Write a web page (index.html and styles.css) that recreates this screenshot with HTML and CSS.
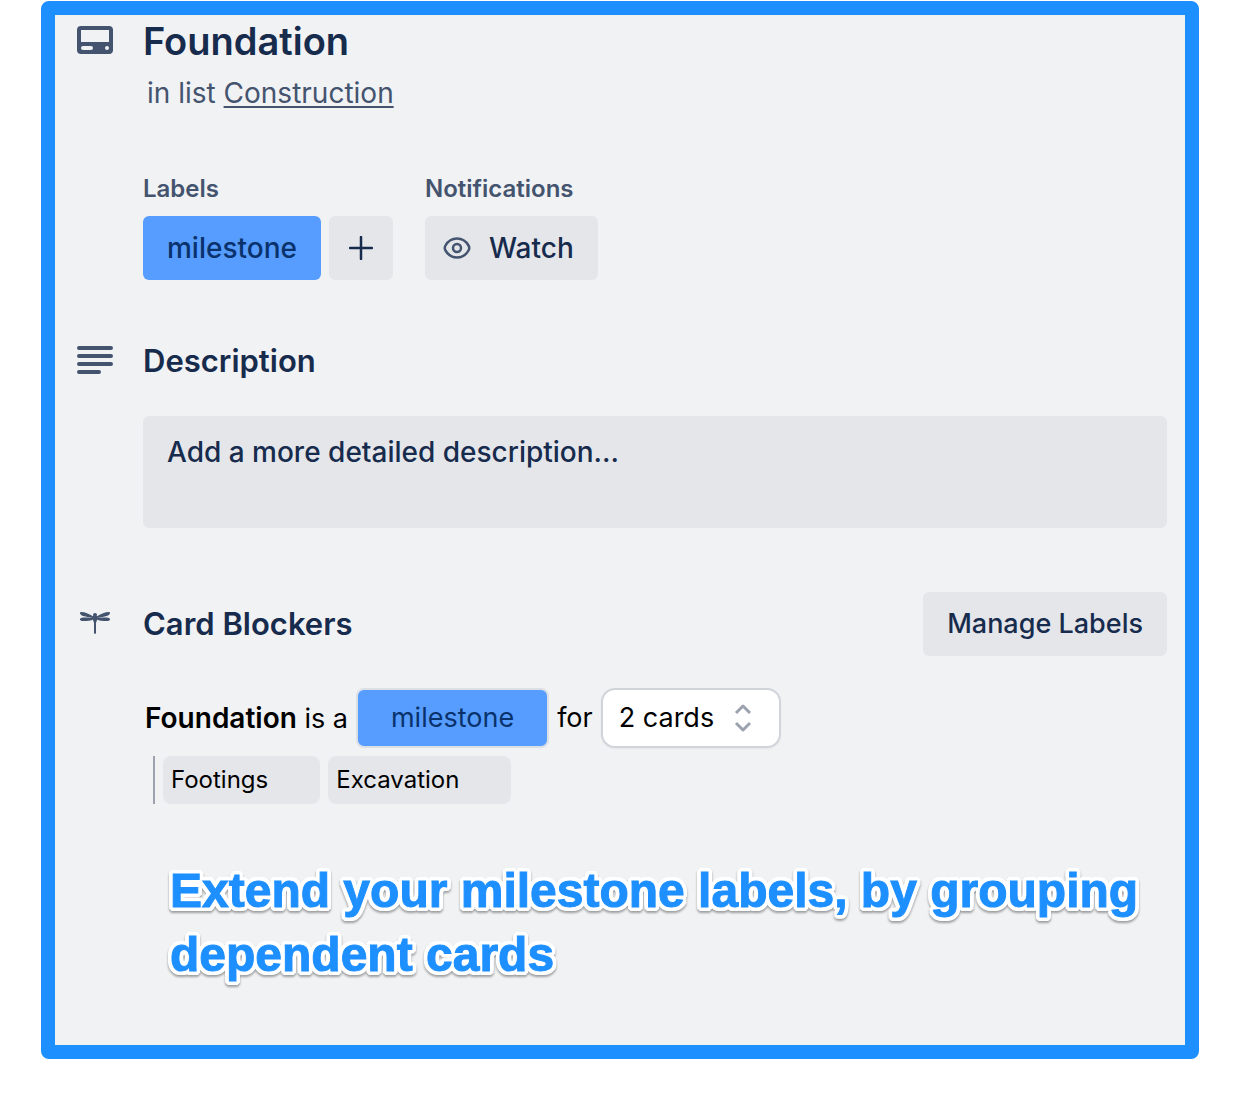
FILE: index.html
```html
<!DOCTYPE html>
<html lang="en">
<head>
  <meta charset="utf-8">
  <title>Foundation</title>
  <link rel="stylesheet" href="styles.css">
</head>
<body>
  <main class="card">
    <header class="section card-header">
      <svg class="icon" viewBox="0 0 36 36" width="36" height="36" aria-hidden="true">
        <path fill-rule="evenodd" fill="#44546f" d="M4 4h28a4 4 0 0 1 4 4v20a4 4 0 0 1-4 4H4a4 4 0 0 1-4-4V8a4 4 0 0 1 4-4zM4 8v12h28V8zM6 24a2 2 0 0 0 0 4h8a2 2 0 0 0 0-4zM30 24a2 2 0 1 0 0 4 2 2 0 0 0 0-4z"/>
      </svg>
      <div>
        <h1>Foundation</h1>
        <p class="in-list">in list <a href="#">Construction</a></p>
      </div>
    </header>

    <div class="details">
      <section>
        <h3>Labels</h3>
        <div class="button-row">
          <button class="button label">milestone</button>
          <button class="button add" aria-label="Add label">
            <svg viewBox="0 0 24 24" width="24" height="24" aria-hidden="true">
              <path d="M12 1v22M1 12h22" stroke="#172b4d" stroke-width="2.500" stroke-linecap="round"/>
            </svg>
          </button>
        </div>
      </section>
      <section>
        <h3>Notifications</h3>
        <button class="button watch">
          <svg viewBox="0 0 28 24" width="28" height="24" fill="none" stroke="#44546f" stroke-width="2.500" aria-hidden="true">
            <path d="M14 2.500C8.500 2.500 4.500 6 2.500 9.500Q1 12 2.500 14.500C4.500 18 8.500 21.500 14 21.500s9.500-3.500 11.500-7Q27 12 25.500 9.500C23.500 6 19.500 2.500 14 2.500z"/>
            <circle cx="14" cy="12" r="4"/>
          </svg>
          Watch
        </button>
      </section>
    </div>

    <section class="section description">
      <svg class="icon" viewBox="0 0 36 36" width="36" height="36" aria-hidden="true">
        <path d="M2 6h32M2 14h32M2 22h32M2 30h20" stroke="#44546f" stroke-width="4" stroke-linecap="round"/>
      </svg>
      <div>
        <h2><label for="description">Description</label></h2>
        <textarea id="description" placeholder="Add a more detailed description..."></textarea>
      </div>
    </section>

    <section class="section blockers">
      <svg class="icon" viewBox="0 0 36 36" width="36" height="36" fill="#44546f" aria-hidden="true">
        <path d="M17 10C13 7 8 5 4 5c-2 0-1 3 2 4 3 1 8 1 11 3zM19 10c4-3 9-5 13-5 2 0 1 3-2 4-3 1-8 1-11 3z"/>
        <path d="M17 11c-5 0-9-1-13 0-2 1-1 3 2 3 4 0 8 0 11-2zM19 11c5 0 9-1 13 0 2 1 1 3-2 3-4 0-8 0-11-2z"/>
        <circle cx="18" cy="8" r="2"/>
        <path d="M16 9h4v4l-1 3v10q-1 2-2 0V16l-1-3z"/>
      </svg>
      <div>
        <div class="blockers-header">
          <h2>Card Blockers</h2>
          <button class="button manage">Manage Labels</button>
        </div>
        <div class="sentence">
          <span><strong>Foundation</strong> is a</span>
          <button class="label-picker">milestone</button>
          <label for="count">for</label>
          <span class="count-picker">
            <select id="count">
              <option>2 cards</option>
            </select>
            <svg viewBox="0 0 20 32" width="20" height="32" aria-hidden="true">
              <path d="M3 11l7-7 7 7M3 21l7 7 7-7" fill="none" stroke="#9ca3af" stroke-width="3" stroke-linejoin="round"/>
            </svg>
          </span>
        </div>
        <ul class="blocked-cards">
          <li>Footings</li>
          <li>Excavation</li>
        </ul>
      </div>
    </section>

    <p class="caption">Extend your milestone labels, by grouping dependent cards</p>
  </main>
</body>
</html>
```
FILE: styles.css
```css
* {
  box-sizing: border-box;
}

body {
  margin: 1px 41px;
  background-color: white;
  color: #172b4d;
  font: 28px/32px Inter, sans-serif;
}

h1, h2, h3, p, ul {
  margin: 0;
  padding: 0;
}

button, select, textarea {
  font: inherit;
  color: inherit;
  border: none;
}

.card {
  padding: 2px 18px 58px 22px;
  border: 14px solid #1d8fff;
  border-radius: 8px;
  background-color: #f1f2f4;
}

.section {
  display: grid;
  grid-template-columns: 36px 1fr;
  column-gap: 30px;
}

.card-header .icon {
  margin-top: 5px;
}

h1 {
  font-size: 38px;
  line-height: 48px;
  font-weight: 600;
}

h2 {
  font-size: 31px;
  line-height: 42px;
  font-weight: 600;
}

h3 {
  margin-bottom: 11px;
  color: #44546f;
  font-size: 24px;
  line-height: 32px;
  font-weight: 600;
}

.in-list {
  padding: 12px 4px 0;
  color: #44546f;
}

.in-list a {
  color: inherit;
  text-underline-offset: 3px;
}

.details {
  display: flex;
  gap: 32px;
  margin: 64px 0 0 66px;
}

.button-row {
  display: flex;
  gap: 8px;
}

.button {
  height: 64px;
  padding: 0 24px;
  border-radius: 6px;
  background-color: #e4e6ea;
  font-weight: 500;
}

.label {
  background-color: #579dff;
  color: #09326c;
}

.add {
  width: 64px;
  padding: 0;
}

.add svg {
  display: block;
  margin: auto;
}

.watch {
  display: flex;
  align-items: center;
  gap: 18px;
  padding-left: 18px;
}

.manage {
  font-size: 27px;
}

.description {
  margin-top: 60px;
}

.description .icon {
  margin-top: 2px;
}

textarea {
  display: block;
  width: 100%;
  height: 112px;
  margin-top: 34px;
  padding: 20px 24px;
  border-radius: 6px;
  background-color: #e4e6ea;
  font-weight: 500;
  resize: none;
}

textarea::placeholder {
  color: #172b4d;
}

.blockers {
  margin-top: 64px;
}

.blockers .icon {
  margin-top: 15px;
}

.blockers-header {
  display: flex;
  align-items: center;
  justify-content: space-between;
}

.sentence {
  display: flex;
  align-items: center;
  gap: 8px;
  margin-top: 32px;
  padding-left: 2px;
  color: black;
  font-size: 27px;
}

.sentence strong {
  font-size: 28px;
  font-weight: 600;
}

.label-picker {
  height: 60px;
  padding: 0 33px;
  border: 2px solid #dcdfe6;
  border-radius: 8px;
  background-color: #579dff;
  color: #09326c;
}

.count-picker {
  display: grid;
  align-items: center;
}

.count-picker select {
  grid-area: 1 / 1;
  width: 180px;
  height: 60px;
  padding: 0 16px;
  appearance: none;
  border: 2px solid #d1d5db;
  border-radius: 14px;
  background-color: white;
  box-shadow: 0 1px 2px rgba(0, 0, 0, 0.05);
}

.count-picker svg {
  grid-area: 1 / 1;
  justify-self: end;
  margin-right: 28px;
  pointer-events: none;
}

.blocked-cards {
  display: flex;
  gap: 8px;
  margin: 8px 0 0 10px;
  padding-left: 8px;
  border-left: 2px solid #9ca3af;
  list-style: none;
  color: black;
  font-size: 24px;
}

.blocked-cards li {
  padding: 8px 52px 8px 8px;
  border-radius: 8px;
  background-color: #e4e6ea;
}

/* white outline with rounded corners, built from a ring of shadows */
.caption {
  margin: 55px 0 0 93px;
  color: #1d8fff;
  font: bold 48px/64px "Liberation Sans", sans-serif;
  -webkit-text-stroke: 1px #1d8fff;
  text-shadow:
    4px 0 white, -4px 0 white, 0 4px white, 0 -4px white,
    3px 3px white, -3px 3px white, 3px -3px white, -3px -3px white,
    4px 2px white, -4px 2px white, 4px -2px white, -4px -2px white,
    2px 4px white, -2px 4px white, 2px -4px white, -2px -4px white,
    2px 0 white, -2px 0 white, 0 2px white, 0 -2px white;
  filter: drop-shadow(0 2px 1px rgba(0, 0, 0, 0.35));
}
```
